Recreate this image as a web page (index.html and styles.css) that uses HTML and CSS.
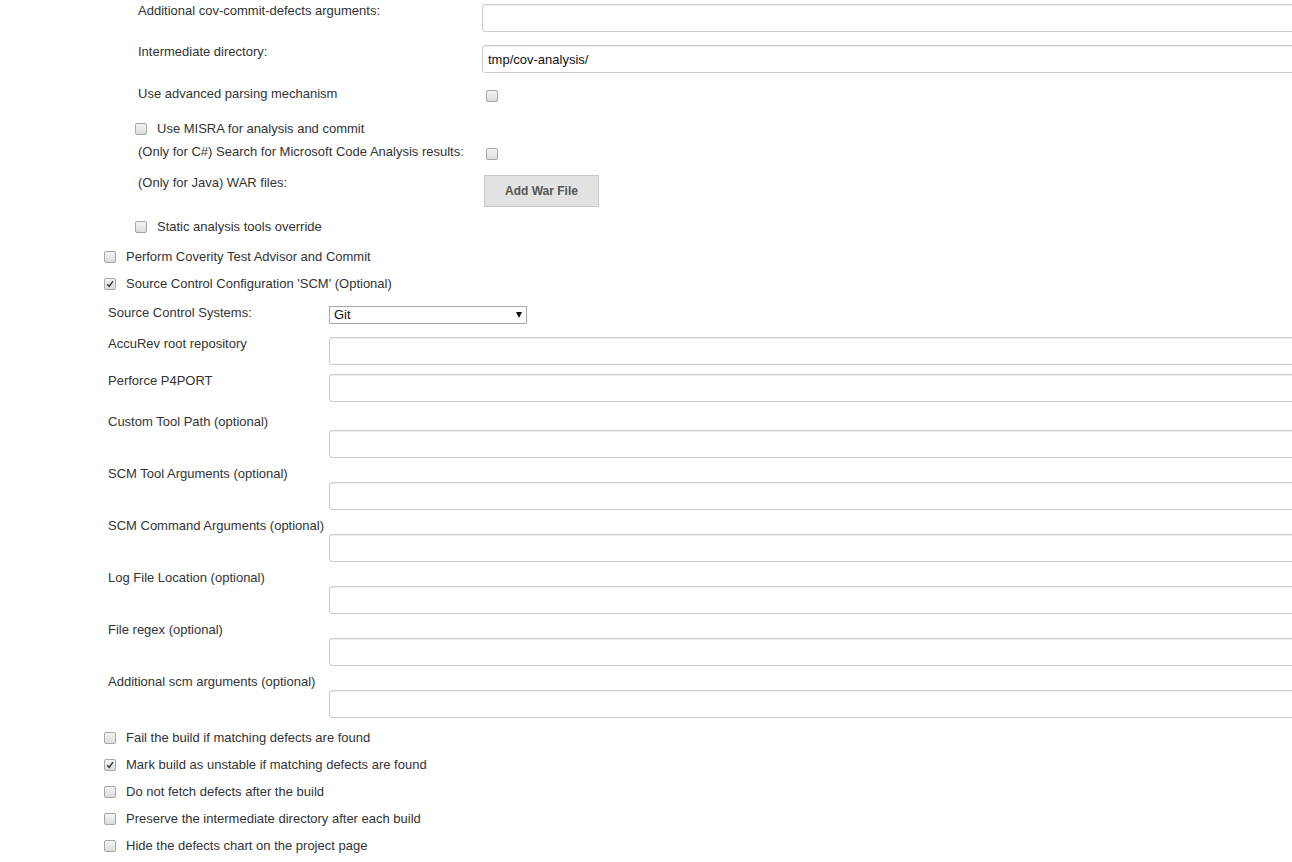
FILE: index.html
```html
<!DOCTYPE html>
<html lang="en">
<head>
    <meta charset="UTF-8">
    <title>Coverity post-build configuration</title>
    <link rel="stylesheet" href="styles.css">
</head>
<body>
<div class=form>
    <div class="section analysis">
        <div class="row row-a">
            <label class=label>Additional cov-commit-defects arguments:</label>
            <div class=control><input class=text type=text></div>
        </div>
        <div class="row row-b">
            <label class=label>Intermediate directory:</label>
            <div class=control><input class=text type=text value="tmp/cov-analysis/"></div>
        </div>
        <div class="row row-c">
            <label class=label>Use advanced parsing mechanism</label>
            <div class=control><span class="cb cb-pad"></span></div>
        </div>
        <div class="check nested row-d">
            <span class=cb></span>
            <span>Use MISRA for analysis and commit</span>
        </div>
        <div class="row row-e">
            <label class=label>(Only for C#) Search for Microsoft Code Analysis results:</label>
            <div class=control><span class="cb cb-pad"></span></div>
        </div>
        <div class="row row-f">
            <label class=label>(Only for Java) WAR files:</label>
            <div class=control><button class=btn>Add War File</button></div>
        </div>
        <div class="check nested row-g">
            <span class=cb></span>
            <span>Static analysis tools override</span>
        </div>
    </div>

    <div class="check top row-h">
        <span class=cb></span>
        <span>Perform Coverity Test Advisor and Commit</span>
    </div>
    <div class="check top row-i">
        <span class="cb checked"><svg viewBox="0 0 12 12"><path d="M2.6 6.4 L5 8.8 L9.6 2.6" fill="none" stroke="#333" stroke-width="1.8"/></svg></span>
        <span>Source Control Configuration 'SCM' (Optional)</span>
    </div>

    <div class="section scm">
        <div class="row row-j">
            <label class=label>Source Control Systems:</label>
            <div class=control>
                <span class=select-wrap>
                    <select class=select><option>Git</option></select>
                </span>
            </div>
        </div>
        <div class="row row-k">
            <label class=label>AccuRev root repository</label>
            <div class=control><input class=text type=text></div>
        </div>
        <div class="row row-l">
            <label class=label>Perforce P4PORT</label>
            <div class=control><input class=text type=text></div>
        </div>
        <div class="row row-m tall">
            <label class=label>Custom Tool Path (optional)</label>
            <div class=control><input class=text type=text></div>
        </div>
        <div class="row tall">
            <label class=label>SCM Tool Arguments (optional)</label>
            <div class=control><input class=text type=text></div>
        </div>
        <div class="row tall">
            <label class=label>SCM Command Arguments (optional)</label>
            <div class=control><input class=text type=text></div>
        </div>
        <div class="row tall">
            <label class=label>Log File Location (optional)</label>
            <div class=control><input class=text type=text></div>
        </div>
        <div class="row tall">
            <label class=label>File regex (optional)</label>
            <div class=control><input class=text type=text></div>
        </div>
        <div class="row tall">
            <label class=label>Additional scm arguments (optional)</label>
            <div class=control><input class=text type=text></div>
        </div>
    </div>

    <div class=options>
        <div class="check top">
            <span class=cb></span>
            <span>Fail the build if matching defects are found</span>
        </div>
        <div class="check top">
            <span class="cb checked"><svg viewBox="0 0 12 12"><path d="M2.6 6.4 L5 8.8 L9.6 2.6" fill="none" stroke="#333" stroke-width="1.8"/></svg></span>
            <span>Mark build as unstable if matching defects are found</span>
        </div>
        <div class="check top">
            <span class=cb></span>
            <span>Do not fetch defects after the build</span>
        </div>
        <div class="check top">
            <span class=cb></span>
            <span>Preserve the intermediate directory after each build</span>
        </div>
        <div class="check top">
            <span class=cb></span>
            <span>Hide the defects chart on the project page</span>
        </div>
    </div>
</div>
</body>
</html>
```

FILE: styles.css
```css
html {
    font-family: "Liberation Sans", Arial, sans-serif;
    font-size: 13px;
    color: #333;
}

body {
    margin: 0;
    overflow: hidden;
    background: #fff;
}

.form {
    display: flex;
    flex-direction: column;
    padding-top: 3px;
}

.row {
    display: grid;
    align-items: start;
    line-height: 16px;
}

.label {
    display: block;
}

.analysis {
    padding-left: 138px;
}

.analysis .row {
    grid-template-columns: 344px 1fr;
}

.scm {
    padding-left: 108px;
    padding-top: 13px;
}

.scm .row {
    grid-template-columns: 221px 1fr;
}

.text {
    display: block;
    box-sizing: border-box;
    width: calc(100% + 20px);
    height: 28px;
    margin: 1px 0 0;
    padding: 0 5px;
    border: 1px solid #ccc;
    border-radius: 3px;
    box-shadow: inset 0 1px 1px rgba(0, 0, 0, 0.075);
    font: inherit;
    color: #111;
    background: #fff;
}

.cb {
    display: inline-block;
    box-sizing: border-box;
    width: 12px;
    height: 12px;
    border: 1px solid #a6a6a6;
    border-radius: 2px;
    background: linear-gradient(#f4f4f4, #dcdcdc);
    flex: none;

    & svg {
        display: block;
        width: 10px;
        height: 10px;
    }
}

.cb-pad {
    display: block;
    margin: 4px 0 0 4px;
}

.check {
    display: flex;
    align-items: flex-start;
    line-height: 16px;

    & .cb {
        margin-top: 2px;
        margin-right: 10px;
    }
}

.nested {
    margin-left: -3px;
}

.top {
    padding-left: 104px;
}

.btn {
    display: block;
    width: 115px;
    height: 32px;
    margin: 0 0 0 2px;
    border: 1px solid #c8c8c8;
    background: #e2e2e2;
    color: #555;
    font: bold 12px "Liberation Sans", Arial, sans-serif;
}

.select-wrap {
    position: relative;
    display: block;
    width: fit-content;
    margin-top: 1px;

    &::after {
        content: '';
        position: absolute;
        right: 5px;
        top: 6px;
        border-left: 3.5px solid transparent;
        border-right: 3.5px solid transparent;
        border-top: 6px solid #111;
        pointer-events: none;
    }
}

.select {
    display: block;
    appearance: none;
    width: 198px;
    height: 18px;
    padding: 0 4px;
    border: 1px solid #a9a9a9;
    border-radius: 0;
    background: #fff;
    font: inherit;
    color: #111;
}

.row-b { margin-top: 12px; }
.row-c { margin-top: 13px; }
.row-d { margin-top: 19px; }
.row-e { margin-top: 7px; }
.row-f { margin-top: 15px; }
.row-g { margin-top: 12px; }
.row-h { margin-top: 14px; }
.row-i { margin-top: 11px; }

.row-k { margin-top: 12px; }
.row-l { margin-top: 8px; }
.row-m { margin-top: 12px !important; }

.tall {
    margin-top: 8px;

    & .text {
        margin-top: 16px;
    }
}

.options {
    display: flex;
    flex-direction: column;
    gap: 11px;
    margin-top: 12px;
}
```
